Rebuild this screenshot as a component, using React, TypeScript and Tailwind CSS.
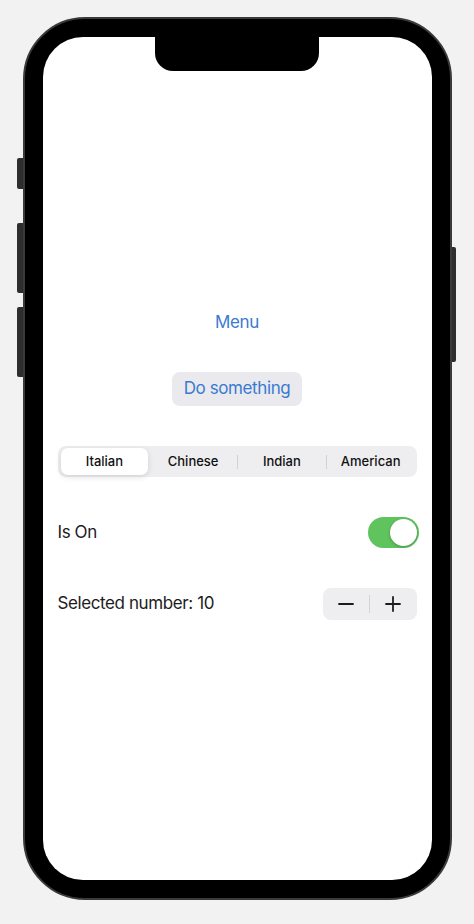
import { useState } from "react";

const cuisines = ["Italian", "Chinese", "Indian", "American"];

const font = { fontFamily: '"Inter", "Liberation Sans", sans-serif' };

function Toggle({ on, onChange }: { on: boolean; onChange: (v: boolean) => void }) {
  return (
    <button
      type="button"
      onClick={() => onChange(!on)}
      className={`-mr-[2px] flex h-[31px] w-[51px] items-center rounded-full p-[2px] ${
        on ? "justify-end bg-[#5fc35e]" : "justify-start bg-[#e5e5ea]"
      }`}
    >
      <span className="h-[27px] w-[27px] rounded-full bg-white shadow-[0_1px_3px_rgba(0,0,0,0.25)]" />
    </button>
  );
}

function Stepper({ onMinus, onPlus }: { onMinus: () => void; onPlus: () => void }) {
  return (
    <div className="flex h-[32px] w-[94px] items-center rounded-[8px] bg-[#eeeef0]">
      <button type="button" onClick={onMinus} className="flex h-full flex-1 items-center justify-center">
        <svg width="16" height="16" viewBox="0 0 16 16">
          <path d="M1 8h14" stroke="#1c1c1e" strokeWidth="1.8" strokeLinecap="round" />
        </svg>
      </button>
      <span className="h-[18px] w-px bg-[#d4d4d8]" />
      <button type="button" onClick={onPlus} className="flex h-full flex-1 items-center justify-center">
        <svg width="16" height="16" viewBox="0 0 16 16">
          <path d="M1 8h14M8 1v14" stroke="#1c1c1e" strokeWidth="1.8" strokeLinecap="round" />
        </svg>
      </button>
    </div>
  );
}

export default function App() {
  const [selected, setSelected] = useState(0);
  const [isOn, setIsOn] = useState(true);
  const [num, setNum] = useState(10);

  return (
    <div className="flex h-[924px] w-full justify-center bg-[#f2f2f2] pt-[17px]" style={font}>
      <div className="relative h-[883px] w-[429px] rounded-[62px] border-[2px] border-[#3a3a3a] bg-black p-[18px]">
        {/* side buttons */}
        <span className="absolute left-[-8px] top-[139px] h-[31px] w-[6px] rounded-l-[2px] bg-[#2e2e2e]" />
        <span className="absolute left-[-8px] top-[204px] h-[70px] w-[6px] rounded-l-[2px] bg-[#2e2e2e]" />
        <span className="absolute left-[-8px] top-[288px] h-[70px] w-[6px] rounded-l-[2px] bg-[#2e2e2e]" />
        <span className="absolute right-[-6px] top-[228px] h-[115px] w-[4px] rounded-r-[2px] bg-[#2e2e2e]" />

        <div className="relative h-full w-full overflow-hidden rounded-[40px] bg-white">
          {/* notch */}
          <div className="absolute left-1/2 top-0 h-[34px] w-[164px] -translate-x-1/2 rounded-b-[18px] bg-black" />

          <div className="flex flex-col items-center gap-10 px-[15px] pt-[275px] tracking-[-0.4px]">
            <button type="button" className="text-[17px] leading-[20px] text-[#3a7bd0]">
              Menu
            </button>

            <button
              type="button"
              className="h-[34px] w-[130px] rounded-[8px] bg-[#e9e9ee] text-[17px] text-[#3a7bd0]"
            >
              Do something
            </button>

            <div className="flex h-[31px] w-full items-center rounded-[8px] bg-[#eeeef0] p-[2px] tracking-normal">
              {cuisines.map((c, i) => {
                const active = i === selected;
                const showDivider = i > 0 && i !== selected && i - 1 !== selected;
                return (
                  <div key={c} className="flex h-full flex-1 items-center">
                    <span className={`h-[14px] w-px ${showDivider ? "bg-[#d1d1d6]" : "bg-transparent"}`} />
                    <button
                      type="button"
                      onClick={() => setSelected(i)}
                      className={`h-full flex-1 rounded-[7px] text-[13px] font-medium text-[#111] ${
                        active ? "bg-white shadow-[0_2px_6px_rgba(0,0,0,0.12)]" : ""
                      }`}
                    >
                      {c}
                    </button>
                  </div>
                );
              })}
            </div>

            <div className="flex w-full items-center justify-between">
              <span className="text-[17px] text-[#1c1c1e]">Is On</span>
              <Toggle on={isOn} onChange={setIsOn} />
            </div>

            <div className="flex w-full items-center justify-between">
              <span className="text-[17px] text-[#1c1c1e]">Selected number: {num}</span>
              <Stepper onMinus={() => setNum(num - 1)} onPlus={() => setNum(num + 1)} />
            </div>
          </div>
        </div>
      </div>
    </div>
  );
}
